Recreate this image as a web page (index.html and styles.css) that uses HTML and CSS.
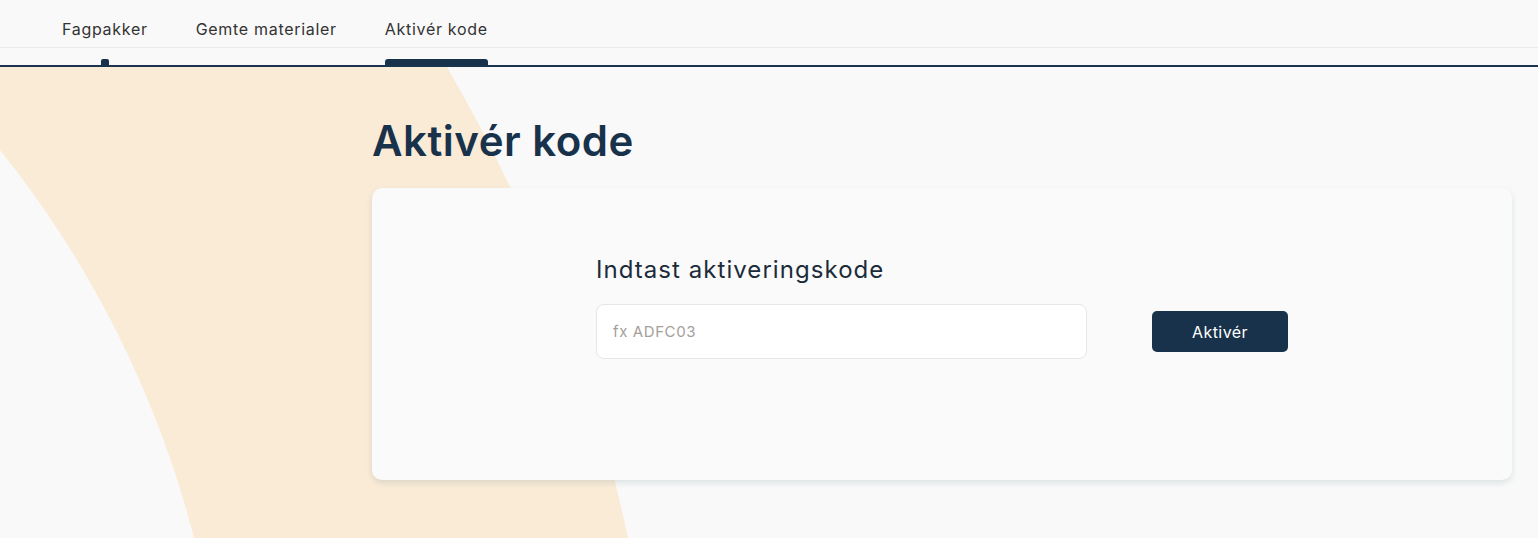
FILE: index.html
```html
<!DOCTYPE html>
<html lang="da">
<head>
<meta charset="utf-8">
<title>Aktivér kode</title>
<link rel="stylesheet" href="styles.css">
</head>
<body>
<header class="topbar">
  <nav class="tabs">
    <a class="tab" href="#">Fagpakker<span class="indicator indicator-stub"></span></a>
    <a class="tab" href="#">Gemte materialer</a>
    <a class="tab tab-active" href="#">Aktivér kode<span class="indicator"></span></a>
  </nav>
</header>
<main class="page">
  <svg class="backdrop" viewBox="0 67 1538 471" preserveAspectRatio="none" aria-hidden="true">
    <path d="M0 67 L447 67 A1592 1592 0 0 1 628 538 L194 538 A1031 1031 0 0 0 0 150 Z" fill="#faebd7"/>
  </svg>
  <div class="content">
    <h1 class="title">Aktivér kode</h1>
    <section class="card">
      <form class="code-form">
        <h2 class="form-title">Indtast aktiveringskode</h2>
        <div class="form-row">
          <input class="code-input" type="text" placeholder="fx ADFC03">
          <button class="btn" type="button">Aktivér</button>
        </div>
      </form>
    </section>
  </div>
</main>
</body>
</html>
```
FILE: styles.css
```css
* { box-sizing: border-box; }
html, body { margin: 0; padding: 0; }
body {
  background: #f9f9f9;
  font-family: Inter, "Open Sans", "DejaVu Sans", sans-serif;
  color: #18324b;
  width: 1538px;
  height: 538px;
  overflow: hidden;
}
.topbar {
  position: relative;
  height: 67px;
  border-bottom: 2px solid #1b344e;
  background: #f9f9f9;
}
.topbar::after {
  content: "";
  position: absolute;
  left: 0; right: 0; top: 47px;
  height: 1px;
  background: #ebebeb;
}
.tabs {
  display: flex;
  gap: 48px;
  padding-left: 62px;
  height: 65px;
}
.tab {
  position: relative;
  display: block;
  height: 65px;
  padding-top: 19px;
  font-size: 16px;
  letter-spacing: 0.7px;
  line-height: 20px;
  color: #333;
  text-decoration: none;
  white-space: nowrap;
}
.indicator {
  position: absolute;
  left: 0; right: 0; bottom: 0;
  height: 6px;
  background: #18324b;
  border-radius: 3px 3px 0 0;
}
.indicator-stub { left: 39px; right: auto; width: 8px; border-radius: 2px 2px 0 0; }
.page {
  position: relative;
  height: 471px;
  overflow: hidden;
}
.backdrop {
  position: absolute;
  left: 0; top: 0;
  width: 1538px;
  height: 471px;
}
.content {
  position: relative;
  padding: 49px 26px 0 372px;
}
.title {
  margin: 0;
  font-size: 42px;
  letter-spacing: 0.5px;
  line-height: 50px;
  font-weight: 600;
  color: #18324b;
}
.card {
  margin-top: 22px;
  height: 292px;
  background: #fafafa;
  border-radius: 10px;
  box-shadow: 0 3px 6px rgba(40, 90, 90, 0.14);
  display: flex;
  justify-content: center;
  padding-top: 66px;
}
.code-form {
  width: 692px;
}
.form-title {
  margin: 0 0 18px;
  font-size: 24px;
  letter-spacing: 1.05px;
  line-height: 32px;
  font-weight: 400;
  color: #1c2b3a;
}
.form-row {
  display: flex;
  align-items: center;
  gap: 65px;
}
.code-input {
  width: 491px;
  height: 55px;
  border: 1px solid #e6e6e6;
  border-radius: 8px;
  background: #fff;
  padding: 0 16px;
  font: inherit;
  font-size: 15px;
  letter-spacing: 0.6px;
  color: #333;
  outline: none;
}
.code-input::placeholder { color: #a3a09a; }
.btn {
  width: 136px;
  height: 41px;
  border: 0;
  border-radius: 5px;
  background: #18324b;
  color: #fff;
  font: inherit;
  font-size: 16px;
  letter-spacing: 0.4px;
  font-weight: 400;
  cursor: pointer;
}
```
